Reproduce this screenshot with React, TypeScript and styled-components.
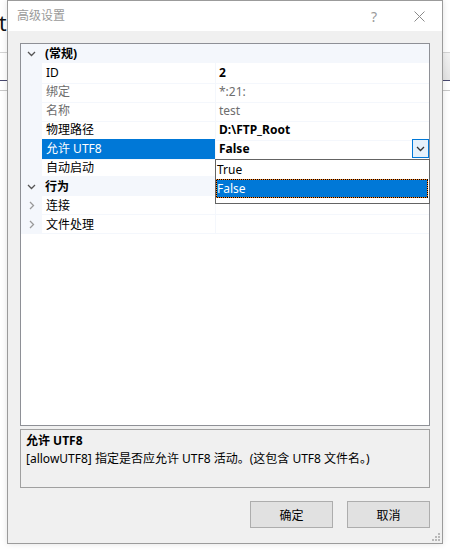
import styled, { createGlobalStyle, css } from 'styled-components';

const GlobalStyle = createGlobalStyle`
  html, body {
    margin: 0;
    padding: 0;
    background: #ffffff;
    overflow: hidden;
  }
  * {
    box-sizing: border-box;
  }
`;

const uiFont = `"Noto Sans", "Noto Sans CJK SC", sans-serif`;

const Stage = styled.div`
  position: relative;
  width: 450px;
  height: 550px;
  font-family: ${uiFont};
  font-size: 12px;
  color: #000;
`;

// the app window behind the dialog
const Backdrop = styled.div`
  display: flex;
  flex-direction: column;
  width: 450px;
  height: 550px;
  background: #fff;
`;

const BackHeader = styled.div`
  height: 52px;
  padding-top: 11px;
`;

const BackTitle = styled.span`
  display: block;
  margin-left: -1px;
  font-size: 21px;
  line-height: 24px;
  color: #111;
`;

const BackToolbar = styled.div`
  height: 28px;
  border-top: 1px solid #d4d4d4;
  display: flex;
  justify-content: flex-end;
`;

const BackTab = styled.div`
  width: 12px;
  background: linear-gradient(#f2f2f2, #e4e4e4);
  border-left: 1px solid #c8c8c8;
`;

const BackRule = styled.div`
  height: 1px;
  background: #47476e;
`;

const BackGap = styled.div`
  height: 10px;
  border-bottom: 1px solid #c8c8c8;
`;

const Dialog = styled.div`
  position: absolute;
  left: 7px;
  top: 0;
  width: 436px;
  height: 544px;
  border: 1px solid #9b9b9b;
  background: #f0f0f0;
  display: flex;
  flex-direction: column;
  box-shadow: 0 0 6px rgba(0, 0, 0, 0.12);
`;

const TitleBar = styled.div`
  height: 30px;
  background: #fff;
  display: flex;
  align-items: center;
`;

const TitleText = styled.div`
  flex: 1;
  padding-left: 9px;
  color: #9a9a9a;
  font-size: 12px;
  line-height: 30px;
`;

const TitleButton = styled.div<{ $w: number }>`
  width: ${(p) => p.$w}px;
  height: 30px;
  display: flex;
  align-items: center;
  justify-content: center;
  color: #9a9a9a;
  font-size: 14px;
`;

const Body = styled.div`
  flex: 1;
  padding: 12px 12px 15px;
  display: flex;
  flex-direction: column;
  position: relative;
`;

const Grid = styled.div`
  position: relative;
  height: 383px;
  border: 1px solid #8e9096;
  background: #fff;
`;

const Row = styled.div<{ $category?: boolean }>`
  display: grid;
  grid-template-columns: 21px 174px 1fr;
  height: 19px;
  ${(p) =>
    p.$category &&
    css`
      background: #f4f7fc;
    `}
`;

const Gutter = styled.div`
  background: #f4f7fc;
  display: flex;
  align-items: center;
  justify-content: center;
`;

const NameCell = styled.div<{ $category?: boolean; $selected?: boolean; $dim?: boolean }>`
  padding-left: 4px;
  line-height: 20px;
  white-space: nowrap;
  overflow: hidden;
  border-bottom: 1px solid #f4f7fc;
  border-right: 1px solid #f4f7fc;
  color: ${(p) => (p.$selected ? '#fff' : p.$dim ? '#6d6d6d' : '#000')};
  background: ${(p) => (p.$selected ? '#0078d7' : 'transparent')};
  ${(p) =>
    p.$category &&
    css`
      font-weight: bold;
      border-right: none;
      grid-column: 2 / 4;
      padding-left: 3px;
    `}
`;

const ValueCell = styled.div<{ $bold?: boolean; $dim?: boolean }>`
  position: relative;
  padding-left: 3px;
  line-height: 20px;
  white-space: nowrap;
  border-bottom: 1px solid #f4f7fc;
  color: ${(p) => (p.$dim ? '#6d6d6d' : '#000')};
  font-weight: ${(p) => (p.$bold ? 'bold' : 'normal')};
`;

const DropButton = styled.div`
  position: absolute;
  right: 0;
  top: 0;
  width: 17px;
  height: 19px;
  border: 1px solid #0078d7;
  background: #e5f1fb;
  display: flex;
  align-items: center;
  justify-content: center;
`;

const DropList = styled.div`
  position: absolute;
  left: 194px;
  top: 115px;
  width: 215px;
  height: 45px;
  border: 1px solid #646464;
  background: #fff;
  padding: 0 1px 0 0;
`;

const dots = (dir: string) =>
  `repeating-linear-gradient(${dir}, #ff8728 0 1px, #000 1px 2px)`;

const DropItem = styled.div<{ $selected?: boolean }>`
  height: 19px;
  padding-left: 1px;
  line-height: 19px;
  color: ${(p) => (p.$selected ? '#fff' : '#000')};
  ${(p) =>
    p.$selected &&
    css`
      background-color: #0078d7;
      background-image: ${dots('90deg')}, ${dots('90deg')}, ${dots('0deg')},
        ${dots('0deg')};
      background-size: 100% 1px, 100% 1px, 1px 100%, 1px 100%;
      background-position: top left, bottom left, top left, top right;
      background-repeat: no-repeat;
    `}
`;

const Description = styled.div`
  margin-top: 3px;
  height: 59px;
  border: 1px solid #a0a0a0;
  background: #f0f0f0;
  padding: 2px 5px;
`;

const DescTitle = styled.div`
  font-weight: bold;
  line-height: 18px;
`;

const DescText = styled.div`
  line-height: 18px;
`;

const ButtonRow = styled.div`
  margin-top: 13px;
  display: flex;
  justify-content: flex-end;
  gap: 14px;
`;

const Button = styled.div`
  width: 83px;
  height: 27px;
  border: 1px solid #adadad;
  background: #e1e1e1;
  display: flex;
  align-items: center;
  justify-content: center;
  font-size: 12px;
`;

const Grip = styled.svg`
  position: absolute;
  right: 1px;
  bottom: 1px;
`;

function ChevronDown({ color = '#555' }: { color?: string }) {
  return (
    <svg width="9" height="6" viewBox="0 0 9 6">
      <polyline points="1,1 4.5,4.5 8,1" fill="none" stroke={color} strokeWidth="1.3" />
    </svg>
  );
}

function ChevronRight() {
  return (
    <svg width="6" height="9" viewBox="0 0 6 9">
      <polyline points="1,1 4.5,4.5 1,8" fill="none" stroke="#9a9a9a" strokeWidth="1.3" />
    </svg>
  );
}

interface Prop {
  name: string;
  value?: string;
  bold?: boolean;
  dim?: boolean;
  selected?: boolean;
  dropdown?: boolean;
  expandable?: boolean;
}

interface Category {
  title: string;
  items: Prop[];
}

const categories: Category[] = [
  {
    title: '(常规)',
    items: [
      { name: 'ID', value: '2', bold: true },
      { name: '绑定', value: '*:21:', dim: true },
      { name: '名称', value: 'test', dim: true },
      { name: '物理路径', value: 'D:\\FTP_Root', bold: true },
      { name: '允许 UTF8', value: 'False', bold: true, selected: true, dropdown: true },
      { name: '自动启动', value: '' },
    ],
  },
  {
    title: '行为',
    items: [
      { name: '连接', expandable: true },
      { name: '文件处理', expandable: true },
    ],
  },
];

export default function App() {
  return (
    <Stage>
      <GlobalStyle />
      <Backdrop>
        <BackHeader>
          <BackTitle>t</BackTitle>
        </BackHeader>
        <BackToolbar>
          <BackTab />
        </BackToolbar>
        <BackRule />
        <BackGap />
      </Backdrop>

      <Dialog>
        <TitleBar>
          <TitleText>高级设置</TitleText>
          <TitleButton $w={44}>?</TitleButton>
          <TitleButton $w={46}>
            <svg width="11" height="11" viewBox="0 0 11 11">
              <path d="M0.5 0.5 L10.5 10.5 M10.5 0.5 L0.5 10.5" stroke="#8a8a8a" strokeWidth="1" />
            </svg>
          </TitleButton>
        </TitleBar>

        <Body>
          <Grid>
            {categories.map((cat) => (
              <div key={cat.title}>
                <Row $category>
                  <Gutter>
                    <ChevronDown />
                  </Gutter>
                  <NameCell $category>{cat.title}</NameCell>
                </Row>
                {cat.items.map((item) => (
                  <Row key={item.name}>
                    <Gutter>{item.expandable && <ChevronRight />}</Gutter>
                    <NameCell $selected={item.selected} $dim={item.dim}>
                      {item.name}
                    </NameCell>
                    <ValueCell $bold={item.bold} $dim={item.dim}>
                      {item.value}
                      {item.dropdown && (
                        <DropButton>
                          <ChevronDown color="#333" />
                        </DropButton>
                      )}
                    </ValueCell>
                  </Row>
                ))}
              </div>
            ))}

            <DropList>
              <DropItem>True</DropItem>
              <DropItem $selected>False</DropItem>
            </DropList>
          </Grid>

          <Description>
            <DescTitle>允许 UTF8</DescTitle>
            <DescText>[allowUTF8] 指定是否应允许 UTF8 活动。(这包含 UTF8 文件名。)</DescText>
          </Description>

          <ButtonRow>
            <Button>确定</Button>
            <Button>取消</Button>
          </ButtonRow>

          <Grip width="10" height="10" viewBox="0 0 10 10">
            {[
              [8, 2],
              [8, 5],
              [5, 5],
              [8, 8],
              [5, 8],
              [2, 8],
            ].map(([x, y]) => (
              <rect key={`${x}-${y}`} x={x - 1} y={y - 1} width="2" height="2" fill="#b8b8b8" />
            ))}
          </Grip>
        </Body>
      </Dialog>
    </Stage>
  );
}
